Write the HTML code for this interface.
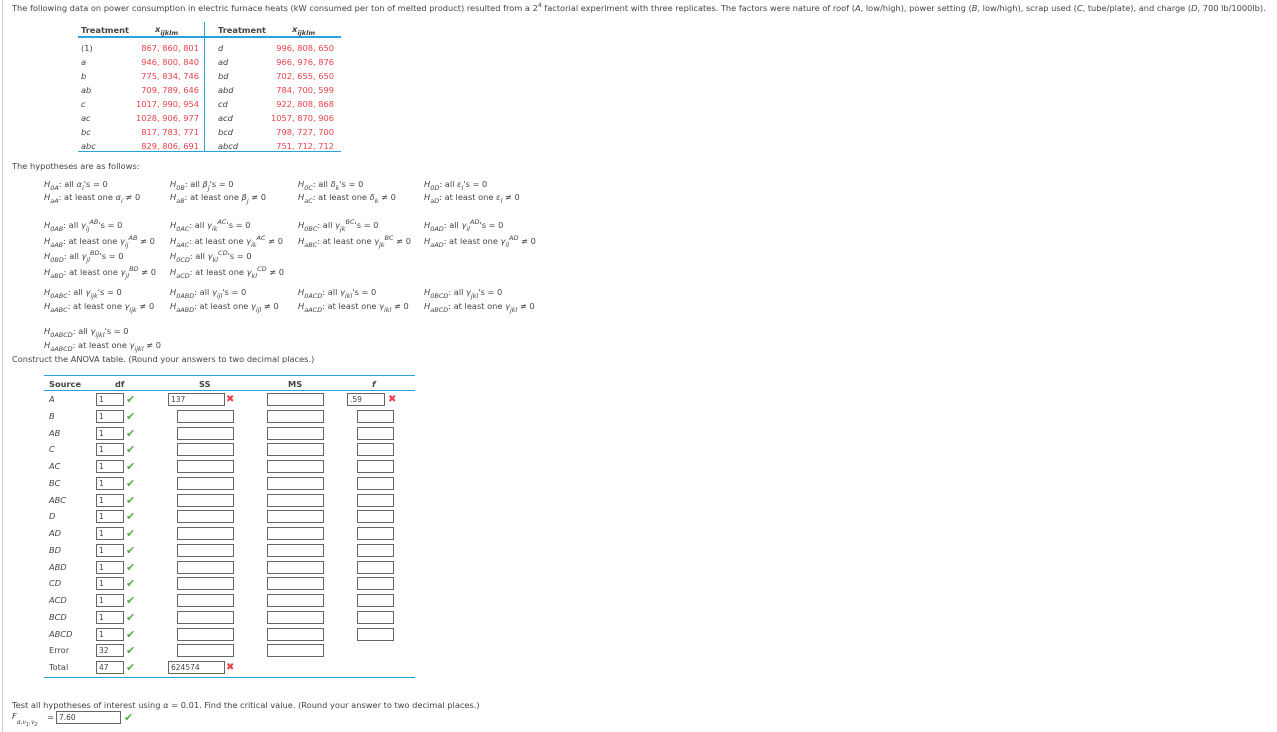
<!DOCTYPE html>
<html><head><meta charset="utf-8"><style>
body{margin:0;width:1277px;height:732px;background:#fff;font-family:"DejaVu Sans","Liberation Sans",sans-serif;font-size:8.25px;color:#444;position:relative;overflow:hidden}
.a{position:absolute;white-space:nowrap}
.lb{position:absolute;left:2px;top:0;width:1px;height:732px;background:#ccc}
i{font-style:italic}
.s{font-size:6.5px;position:relative;top:3px;font-style:italic}
.p{font-size:6.5px;position:relative;top:-4px;font-style:italic}
.r{color:#e8424a}
.row{position:absolute;left:0;width:420px;height:14px}
.in{position:absolute;height:11px;border:1px solid #666;background:#fff;font-size:7.5px;line-height:11px;padding-left:2px;box-sizing:content-box;color:#444}
.ck{position:absolute;color:#5aaa4a;font-size:11px;line-height:13px}
.x{position:absolute;color:#e8424a;font-size:10px;line-height:13px;font-weight:bold}
.src{position:absolute;left:49px;line-height:13px}
</style></head><body>
<div class="lb"></div>
<div class="a" style="left:12px;top:2px">The following data on power consumption in electric furnace heats (kW consumed per ton of melted product) resulted from a 2<sup style="font-size:6px">4</sup> factorial experiment with three replicates. The factors were nature of roof (<i>A</i>, low/high), power setting (<i>B</i>, low/high), scrap used (<i>C</i>, tube/plate), and charge (<i>D</i>, 700 lb/1000lb).</div>

<div class="a" style="left:78px;top:36px;width:263px;height:2px;background:#29a3dc"></div>
<div class="a" style="left:78px;top:151px;width:263px;height:1px;background:#29a3dc"></div>
<div class="a" style="left:204px;top:22px;width:1px;height:130px;background:#29a3dc"></div>
<div class="a" style="left:81px;top:25px;font-weight:bold">Treatment</div>
<div class="a" style="left:155px;top:24px;font-weight:bold"><i>x</i><span class="s">ijklm</span></div>
<div class="a" style="left:218px;top:25px;font-weight:bold">Treatment</div>
<div class="a" style="left:292px;top:24px;font-weight:bold"><i>x</i><span class="s">ijklm</span></div>
<div class="a" style="left:81px;top:41px;line-height:14px">(1)<br><i>a</i><br><i>b</i><br><i>ab</i><br><i>c</i><br><i>ac</i><br><i>bc</i><br><i>abc</i></div>
<div class="a r" style="left:120px;width:79px;text-align:right;top:41px;line-height:14px">867, 860, 801<br>946, 800, 840<br>775, 834, 746<br>709, 789, 646<br>1017, 990, 954<br>1028, 906, 977<br>817, 783, 771<br>829, 806, 691</div>
<div class="a" style="left:218px;top:41px;line-height:14px"><i>d</i><br><i>ad</i><br><i>bd</i><br><i>abd</i><br><i>cd</i><br><i>acd</i><br><i>bcd</i><br><i>abcd</i></div>
<div class="a r" style="left:255px;width:79px;text-align:right;top:41px;line-height:14px">996, 808, 650<br>966, 976, 876<br>702, 655, 650<br>784, 700, 599<br>922, 808, 868<br>1057, 870, 906<br>798, 727, 700<br>751, 712, 712</div>

<div class="a" style="left:12px;top:161px">The hypotheses are as follows:</div>

<div class="a" style="left:44px;top:178px;line-height:12px"><i>H</i><span class="s">0A</span>: all <i>α</i><span class="s">i</span>'s = 0<br><i>H</i><span class="s">aA</span>: at least one <i>α</i><span class="s">i</span> ≠ 0</div>
<div class="a" style="left:170px;top:178px;line-height:12px"><i>H</i><span class="s">0B</span>: all <i>β</i><span class="s">j</span>'s = 0<br><i>H</i><span class="s">aB</span>: at least one <i>β</i><span class="s">j</span> ≠ 0</div>
<div class="a" style="left:298px;top:178px;line-height:12px"><i>H</i><span class="s">0C</span>: all <i>δ</i><span class="s">k</span>'s = 0<br><i>H</i><span class="s">aC</span>: at least one <i>δ</i><span class="s">k</span> ≠ 0</div>
<div class="a" style="left:424px;top:178px;line-height:12px"><i>H</i><span class="s">0D</span>: all <i>ε</i><span class="s">l</span>'s = 0<br><i>H</i><span class="s">aD</span>: at least one <i>ε</i><span class="s">l</span> ≠ 0</div>

<div class="a" style="left:44px;top:218px;line-height:14.5px"><i>H</i><span class="s">0AB</span>: all <i>γ</i><span class="s">ij</span><span class="p">AB</span>'s = 0<br><i>H</i><span class="s">aAB</span>: at least one <i>γ</i><span class="s">ij</span><span class="p">AB</span> ≠ 0<br><i>H</i><span class="s">0BD</span>: all <i>γ</i><span class="s">jl</span><span class="p">BD</span>'s = 0<br><i>H</i><span class="s">aBD</span>: at least one <i>γ</i><span class="s">jl</span><span class="p">BD</span> ≠ 0</div>
<div class="a" style="left:170px;top:218px;line-height:14.5px"><i>H</i><span class="s">0AC</span>: all <i>γ</i><span class="s">ik</span><span class="p">AC</span>'s = 0<br><i>H</i><span class="s">aAC</span>: at least one <i>γ</i><span class="s">ik</span><span class="p">AC</span> ≠ 0<br><i>H</i><span class="s">0CD</span>: all <i>γ</i><span class="s">kl</span><span class="p">CD</span>'s = 0<br><i>H</i><span class="s">aCD</span>: at least one <i>γ</i><span class="s">kl</span><span class="p">CD</span> ≠ 0</div>
<div class="a" style="left:298px;top:218px;line-height:14.5px"><i>H</i><span class="s">0BC</span>: all <i>γ</i><span class="s">jk</span><span class="p">BC</span>'s = 0<br><i>H</i><span class="s">aBC</span>: at least one <i>γ</i><span class="s">jk</span><span class="p">BC</span> ≠ 0</div>
<div class="a" style="left:424px;top:218px;line-height:14.5px"><i>H</i><span class="s">0AD</span>: all <i>γ</i><span class="s">il</span><span class="p">AD</span>'s = 0<br><i>H</i><span class="s">aAD</span>: at least one <i>γ</i><span class="s">il</span><span class="p">AD</span> ≠ 0</div>

<div class="a" style="left:44px;top:286px;line-height:12.5px"><i>H</i><span class="s">0ABC</span>: all <i>γ</i><span class="s">ijk</span>'s = 0<br><i>H</i><span class="s">aABC</span>: at least one <i>γ</i><span class="s">ijk</span> ≠ 0</div>
<div class="a" style="left:170px;top:286px;line-height:12.5px"><i>H</i><span class="s">0ABD</span>: all <i>γ</i><span class="s">ijl</span>'s = 0<br><i>H</i><span class="s">aABD</span>: at least one <i>γ</i><span class="s">ijl</span> ≠ 0</div>
<div class="a" style="left:298px;top:286px;line-height:12.5px"><i>H</i><span class="s">0ACD</span>: all <i>γ</i><span class="s">ikl</span>'s = 0<br><i>H</i><span class="s">aACD</span>: at least one <i>γ</i><span class="s">ikl</span> ≠ 0</div>
<div class="a" style="left:424px;top:286px;line-height:12.5px"><i>H</i><span class="s">0BCD</span>: all <i>γ</i><span class="s">jkl</span>'s = 0<br><i>H</i><span class="s">aBCD</span>: at least one <i>γ</i><span class="s">jkl</span> ≠ 0</div>

<div class="a" style="left:44px;top:325px;line-height:12.5px"><i>H</i><span class="s">0ABCD</span>: all <i>γ</i><span class="s">ijkl</span>'s = 0<br><i>H</i><span class="s">aABCD</span>: at least one <i>γ</i><span class="s">ijkl</span> ≠ 0</div>

<div class="a" style="left:12px;top:354px">Construct the ANOVA table. (Round your answers to two decimal places.)</div>

<div class="a" style="left:44px;top:375px;width:371px;height:1px;background:#29a3dc"></div>
<div class="a" style="left:44px;top:390px;width:371px;height:1px;background:#29a3dc"></div>
<div class="a" style="left:44px;top:677px;width:371px;height:1px;background:#29a3dc"></div>
<div class="a" style="left:49px;top:379px;font-weight:bold">Source</div>
<div class="a" style="left:115px;top:379px;font-weight:bold">df</div>
<div class="a" style="left:199px;top:379px;font-weight:bold">SS</div>
<div class="a" style="left:288px;top:379px;font-weight:bold">MS</div>
<div class="a" style="left:372px;top:379px;font-weight:bold"><i>f</i></div>

<div class="row" style="top:393px"><div class="src"><i>A</i></div><div class="in" style="left:96px;width:24px">1</div><div class="ck" style="left:126px">✔</div><div class="in" style="left:168px;width:53px">137</div><div class="x" style="left:226px">✖</div><div class="in" style="left:267px;width:53px"></div><div class="in" style="left:347px;width:34px">.59</div><div class="x" style="left:388px">✖</div></div>
<div class="row" style="top:410px"><div class="src"><i>B</i></div><div class="in" style="left:96px;width:24px">1</div><div class="ck" style="left:126px">✔</div><div class="in" style="left:177px;width:53px"></div><div class="in" style="left:267px;width:53px"></div><div class="in" style="left:357px;width:33px"></div></div>
<div class="row" style="top:426.5px"><div class="src"><i>AB</i></div><div class="in" style="left:96px;width:24px">1</div><div class="ck" style="left:126px">✔</div><div class="in" style="left:177px;width:53px"></div><div class="in" style="left:267px;width:53px"></div><div class="in" style="left:357px;width:33px"></div></div>
<div class="row" style="top:443.25px"><div class="src"><i>C</i></div><div class="in" style="left:96px;width:24px">1</div><div class="ck" style="left:126px">✔</div><div class="in" style="left:177px;width:53px"></div><div class="in" style="left:267px;width:53px"></div><div class="in" style="left:357px;width:33px"></div></div>
<div class="row" style="top:460px"><div class="src"><i>AC</i></div><div class="in" style="left:96px;width:24px">1</div><div class="ck" style="left:126px">✔</div><div class="in" style="left:177px;width:53px"></div><div class="in" style="left:267px;width:53px"></div><div class="in" style="left:357px;width:33px"></div></div>
<div class="row" style="top:476.75px"><div class="src"><i>BC</i></div><div class="in" style="left:96px;width:24px">1</div><div class="ck" style="left:126px">✔</div><div class="in" style="left:177px;width:53px"></div><div class="in" style="left:267px;width:53px"></div><div class="in" style="left:357px;width:33px"></div></div>
<div class="row" style="top:493.5px"><div class="src"><i>ABC</i></div><div class="in" style="left:96px;width:24px">1</div><div class="ck" style="left:126px">✔</div><div class="in" style="left:177px;width:53px"></div><div class="in" style="left:267px;width:53px"></div><div class="in" style="left:357px;width:33px"></div></div>
<div class="row" style="top:510.25px"><div class="src"><i>D</i></div><div class="in" style="left:96px;width:24px">1</div><div class="ck" style="left:126px">✔</div><div class="in" style="left:177px;width:53px"></div><div class="in" style="left:267px;width:53px"></div><div class="in" style="left:357px;width:33px"></div></div>
<div class="row" style="top:527px"><div class="src"><i>AD</i></div><div class="in" style="left:96px;width:24px">1</div><div class="ck" style="left:126px">✔</div><div class="in" style="left:177px;width:53px"></div><div class="in" style="left:267px;width:53px"></div><div class="in" style="left:357px;width:33px"></div></div>
<div class="row" style="top:543.75px"><div class="src"><i>BD</i></div><div class="in" style="left:96px;width:24px">1</div><div class="ck" style="left:126px">✔</div><div class="in" style="left:177px;width:53px"></div><div class="in" style="left:267px;width:53px"></div><div class="in" style="left:357px;width:33px"></div></div>
<div class="row" style="top:560.5px"><div class="src"><i>ABD</i></div><div class="in" style="left:96px;width:24px">1</div><div class="ck" style="left:126px">✔</div><div class="in" style="left:177px;width:53px"></div><div class="in" style="left:267px;width:53px"></div><div class="in" style="left:357px;width:33px"></div></div>
<div class="row" style="top:577.25px"><div class="src"><i>CD</i></div><div class="in" style="left:96px;width:24px">1</div><div class="ck" style="left:126px">✔</div><div class="in" style="left:177px;width:53px"></div><div class="in" style="left:267px;width:53px"></div><div class="in" style="left:357px;width:33px"></div></div>
<div class="row" style="top:594px"><div class="src"><i>ACD</i></div><div class="in" style="left:96px;width:24px">1</div><div class="ck" style="left:126px">✔</div><div class="in" style="left:177px;width:53px"></div><div class="in" style="left:267px;width:53px"></div><div class="in" style="left:357px;width:33px"></div></div>
<div class="row" style="top:610.75px"><div class="src"><i>BCD</i></div><div class="in" style="left:96px;width:24px">1</div><div class="ck" style="left:126px">✔</div><div class="in" style="left:177px;width:53px"></div><div class="in" style="left:267px;width:53px"></div><div class="in" style="left:357px;width:33px"></div></div>
<div class="row" style="top:627.5px"><div class="src"><i>ABCD</i></div><div class="in" style="left:96px;width:24px">1</div><div class="ck" style="left:126px">✔</div><div class="in" style="left:177px;width:53px"></div><div class="in" style="left:267px;width:53px"></div><div class="in" style="left:357px;width:33px"></div></div>
<div class="row" style="top:644.25px"><div class="src">Error</div><div class="in" style="left:96px;width:24px">32</div><div class="ck" style="left:126px">✔</div><div class="in" style="left:177px;width:53px"></div><div class="in" style="left:267px;width:53px"></div></div>
<div class="row" style="top:661px"><div class="src">Total</div><div class="in" style="left:96px;width:24px">47</div><div class="ck" style="left:126px">✔</div><div class="in" style="left:168px;width:53px">624574</div><div class="x" style="left:226px">✖</div></div>

<div class="a" style="left:12px;top:700px">Test all hypotheses of interest using <i>α</i> = 0.01. Find the critical value. (Round your answer to two decimal places.)</div>
<div class="a" style="left:12px;top:711px"><i>F</i><span class="s" style="font-size:6px;top:5px">α,ν<sub style="font-size:5px">1</sub>,ν<sub style="font-size:5px">2</sub></span></div>
<div class="a" style="left:47px;top:712px">=</div>
<div class="in" style="left:56px;top:711px;width:61px;position:absolute">7.60</div>
<div class="ck" style="left:124px;top:711px">✔</div>
</body></html>
